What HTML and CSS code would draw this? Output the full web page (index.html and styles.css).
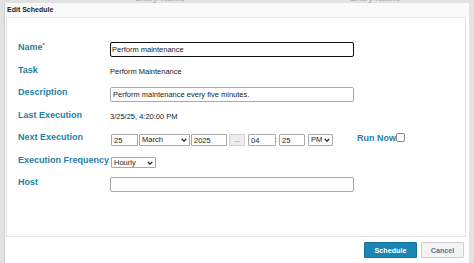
FILE: index.html
```html
<!DOCTYPE html>
<html lang="en">
<head>
    <meta charset="UTF-8">
    <meta name="viewport" content="width=device-width, initial-scale=1.0">
    <title>Edit Schedule</title>
    <link rel="stylesheet" href="styles.css">
</head>
<body>
    <div class="backdrop">
        <span>Entry Name</span>
        <span>Entry Name</span>
    </div>
    <div class="dialog">
        <div class="dialog-header">Edit Schedule</div>
        <div class="panel">
            <div class="form">
                <div class="label">Name<sup class="req">*</sup></div>
                <div><input class="field focus" type="text" value="Perform maintenance"></div>

                <div class="label">Task</div>
                <div class="value">Perform Maintenance</div>

                <div class="label">Description</div>
                <div><input class="field" type="text" value="Perform maintenance every five minutes."></div>

                <div class="label">Last Execution</div>
                <div class="value">3/25/25, 4:20:00 PM</div>

                <div class="label">Next Execution</div>
                <div class="datetime">
                    <input class="small day" type="text" value="25">
                    <span class="select month">
                        <select><option>March</option></select>
                        <svg class="chev" viewBox="0 0 8 5"><path d="M1 1l3 3 3-3" /></svg>
                    </span>
                    <input class="small year" type="text" value="2025">
                    <button class="picker">...</button>
                    <input class="small hour" type="text" value="04">
                    <span class="colon">:</span>
                    <input class="small minute" type="text" value="25">
                    <span class="select ampm">
                        <select><option>PM</option></select>
                        <svg class="chev" viewBox="0 0 8 5"><path d="M1 1l3 3 3-3" /></svg>
                    </span>
                    <label class="run-now">Run Now<input class="check" type="checkbox"></label>
                </div>

                <div class="label">Execution Frequency</div>
                <div class="freq-row">
                    <span class="select freq">
                        <select><option>Hourly</option></select>
                        <svg class="chev" viewBox="0 0 8 5"><path d="M1 1l3 3 3-3" /></svg>
                    </span>
                </div>

                <div class="label">Host</div>
                <div><input class="field" type="text" value=""></div>
            </div>
        </div>
        <div class="dialog-footer">
            <button class="btn btn-primary">Schedule</button>
            <button class="btn btn-cancel">Cancel</button>
        </div>
    </div>
</body>
</html>
```

FILE: styles.css
```css
body {
    margin: 0;
    height: 263px;
    overflow: hidden;
    background-color: #e2e2e2;
    font-family: "Liberation Sans", Arial, sans-serif;
}

.backdrop {
    height: 3px;
    overflow: hidden;
    display: flex;
    gap: 165px;
    padding-left: 135px;
}

.backdrop span {
    margin-top: -7px;
    font-size: 9px;
    font-weight: bold;
    color: #b8b8b8;
}

.dialog {
    margin: 0 5px 0 4px;
    height: 260px;
    background-color: #fff;
    border-left: 1px solid #cdcdcd;
}

.dialog-header {
    height: 14px;
    line-height: 13px;
    padding-left: 2px;
    font-size: 7px;
    font-weight: bold;
    color: #222;
    background-color: #fafafa;
}

.panel {
    box-sizing: border-box;
    height: 220px;
    margin: 0 3px 0 1px;
    padding: 24px 0 0 11px;
    border: 1px solid #e4e4e4;
}

.form {
    display: grid;
    grid-template-columns: 92px auto;
    grid-auto-rows: 22.5px;
}

.label {
    padding-top: 1px;
    font-size: 9px;
    line-height: 9px;
    font-weight: bold;
    color: #1f80a5;
}

.req {
    font-size: 6px;
    color: #d9363e;
    vertical-align: 3px;
    line-height: 0;
}

.value {
    padding-top: 2px;
    font-size: 7.5px;
    line-height: 9px;
    color: #222;
}

input {
    font-family: inherit;
    color: #222;
}

.field {
    display: block;
    box-sizing: border-box;
    width: 244px;
    height: 15px;
    margin: 0;
    padding: 0 2px;
    font-size: 7.5px;
    border: 1px solid #a8a8a8;
    border-radius: 2px;
    outline: none;
}

.field.focus {
    padding-left: 1px;
    border: 1.5px solid #111;
}

.datetime {
    display: flex;
    align-items: flex-start;
    margin-top: 2px;
}

.small {
    box-sizing: border-box;
    height: 12px;
    margin: 0;
    padding: 0 2px;
    font-size: 7.5px;
    border: 1px solid #a8a8a8;
    border-radius: 1px;
    outline: none;
}

.day { width: 27px; margin-left: 1px; }
.year { width: 36px; margin-left: 1px; }
.hour { width: 28px; margin-left: 3px; }
.minute { width: 26px; }

.colon {
    width: 3px;
    font-size: 7px;
    line-height: 12px;
    color: #888;
}

.select {
    position: relative;
    display: block;
    height: 12px;
}

.select select {
    display: block;
    box-sizing: border-box;
    height: 12px;
    width: 100%;
    margin: 0;
    padding: 0 2px;
    font-family: inherit;
    font-size: 7.5px;
    line-height: 10px;
    color: #222;
    background-color: #fff;
    border: 1px solid #a8a8a8;
    border-radius: 1px;
    appearance: none;
    -webkit-appearance: none;
    outline: none;
}

.chev {
    position: absolute;
    top: 4px;
    right: 3px;
    width: 6px;
    height: 4px;
    fill: none;
    stroke: #222;
    stroke-width: 1.8;
}

.month { width: 51px; margin-left: 1px; }
.ampm { width: 25px; margin-left: 3px; }

.picker {
    box-sizing: border-box;
    width: 16px;
    height: 12px;
    margin-left: 2px;
    padding: 0;
    font-size: 7px;
    line-height: 8px;
    color: #4f6f80;
    background-color: #ececec;
    border: 1px solid #d2d2d2;
    border-radius: 1px;
}

.run-now {
    display: flex;
    align-items: flex-start;
    margin-left: 24px;
    font-size: 9px;
    line-height: 9px;
    font-weight: bold;
    color: #1f80a5;
}

.check {
    box-sizing: border-box;
    width: 9px;
    height: 9px;
    margin: -1px 0 0 0;
    border: 1px solid #888;
    border-radius: 2px;
    background-color: #fff;
    appearance: none;
    -webkit-appearance: none;
}

.freq-row {
    display: flex;
    padding-top: 2.5px;
}

.freq { width: 45px; margin-left: 1px; height: 11px; }
.freq select { height: 11px; }
.freq .chev { top: 4px; }

.dialog-footer {
    display: flex;
    justify-content: flex-end;
    gap: 4px;
    padding: 5px 5px 0 0;
}

.btn {
    box-sizing: border-box;
    height: 16px;
    padding: 0;
    font-family: inherit;
    font-size: 7.2px;
    font-weight: bold;
    border-radius: 1px;
}

.btn-primary {
    width: 53px;
    color: #fff;
    background-color: #1986b4;
    border: 1px solid #13719a;
}

.btn-cancel {
    width: 43px;
    color: #4a7a90;
    background-color: #f3f3f3;
    border: 1px solid #cfcfcf;
}
```
